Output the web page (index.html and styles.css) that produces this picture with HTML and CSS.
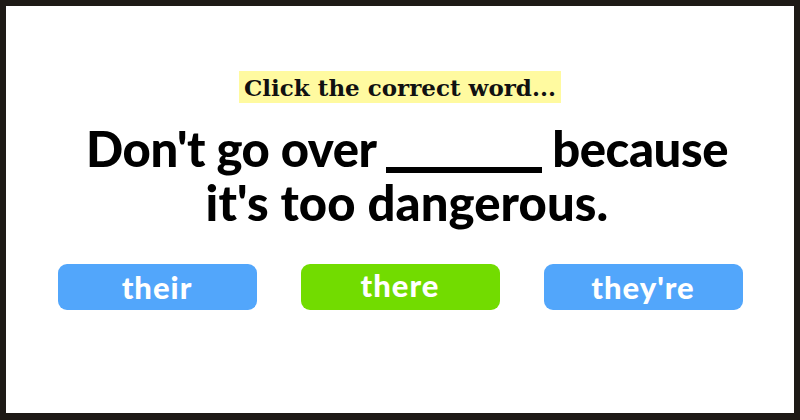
FILE: index.html
```html
<!DOCTYPE html>
<html lang="en">
<head>
    <meta charset="UTF-8">
    <meta name="viewport" content="width=device-width, initial-scale=1.0">
    <title>Their / There / They're</title>
    <link rel="stylesheet" href="styles.css">
</head>
<body>
    <div id="frame">
        <p class="hint">Click the correct word...</p>
        <h1 class="question">Don't go over <span class="blank"></span> because<br><span class="tail">it's too dangerous.</span></h1>
        <ul class="choices">
            <li class="choice">their</li>
            <li class="choice correct">there</li>
            <li class="choice">they're</li>
        </ul>
    </div>
</body>
</html>
```

FILE: styles.css
```css
*{
    margin: 0;
    padding: 0;
}
ul{
    list-style: none;
}
body{
    background: #1e1a16;
    width: 800px;
    height: 420px;
    overflow: hidden;
}
#frame{
    margin: 6px 6px 7px 6px;
    height: 407px;
    background: #ffffff;
    display: flex;
    flex-direction: column;
    align-items: center;
}
.hint{
    margin-top: 65px;
    padding: 0 5px;
    height: 32px;
    line-height: 34px;
    background: #fffaa0;
    color: #111111;
    font-family: "DejaVu Serif", serif;
    font-weight: bold;
    font-size: 23px;
}
.question{
    margin-top: 18px;
    padding-left: 14px;
    font-family: Lato, sans-serif;
    font-weight: 900;
    font-size: 49px;
    line-height: 54px;
    letter-spacing: -0.4px;
    text-align: center;
    color: #000000;
}
.question .tail{
    letter-spacing: 0.1px;
}
/* the gap the player has to fill */
.blank{
    display: inline-block;
    width: 156px;
    height: 6px;
    margin: 0 -1px;
    background: #000000;
    vertical-align: -6px;
}
.choices{
    margin-top: 35px;
    display: flex;
    gap: 44px;
}
.choice{
    width: 199px;
    height: 46px;
    border-radius: 9px;
    background: #52a6fb;
    color: #ffffff;
    font-family: Lato, sans-serif;
    font-weight: 900;
    font-size: 31px;
    line-height: 46px;
    letter-spacing: 1px;
    text-align: center;
}
.choice.correct{
    background: #72dc00;
    line-height: 42px;
}
```
